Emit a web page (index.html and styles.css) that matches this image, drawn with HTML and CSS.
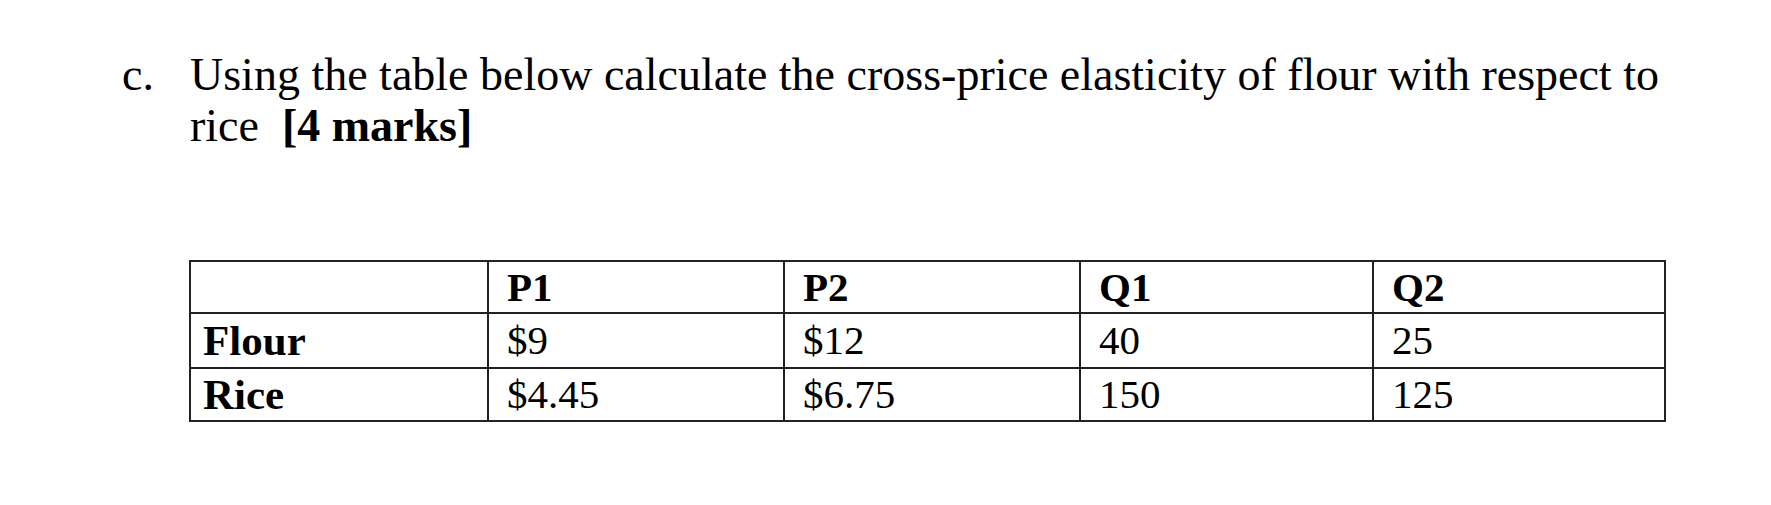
FILE: index.html
```html
<!DOCTYPE html>
<html>
<head>
<meta charset="utf-8">
<link rel="stylesheet" href="styles.css">
</head>
<body>
<div class="page">
  <div class="question">
    <div class="label">c.</div>
    <div class="text">Using the table below calculate the cross-price elasticity of flour with respect to<br>rice&nbsp; <b>[4 marks]</b></div>
  </div>
  <div class="table">
    <div class="cell r1"></div>
    <div class="cell r1 head">P1</div>
    <div class="cell r1 head">P2</div>
    <div class="cell r1 head">Q1</div>
    <div class="cell r1 head">Q2</div>
    <div class="cell r2 name">Flour</div>
    <div class="cell r2">$9</div>
    <div class="cell r2">$12</div>
    <div class="cell r2">40</div>
    <div class="cell r2">25</div>
    <div class="cell r3 name">Rice</div>
    <div class="cell r3">$4.45</div>
    <div class="cell r3">$6.75</div>
    <div class="cell r3">150</div>
    <div class="cell r3">125</div>
  </div>
</div>
</body>
</html>
```
FILE: styles.css
```css
html, body {
  margin: 0;
  padding: 0;
  background: #ffffff;
}
.page {
  width: 1771px;
  height: 505px;
  color: #000;
  font-family: "Liberation Serif", "Times New Roman", serif;
}
.question {
  display: grid;
  grid-template-columns: 68px auto;
  margin-left: 122px;
  padding-top: 49px;
  font-size: 46px;
  line-height: 51px;
}
.text b {
  font-weight: bold;
}
.table {
  display: grid;
  grid-template-columns: 296px 294px 294px 291px 290px;
  grid-template-rows: 50px 53px 51px;
  gap: 2px;
  padding: 2px;
  background: #222;
  width: max-content;
  margin-left: 189px;
  margin-top: 109px;
  font-size: 41px;
}
.cell {
  background: #fff;
  padding-left: 18px;
  white-space: nowrap;
}
.r1 { line-height: 50px; }
.r2 { line-height: 53px; }
.r3 { line-height: 51px; }
.head, .name {
  font-weight: bold;
}
.name {
  padding-left: 12px;
  font-size: 43px;
}
```
